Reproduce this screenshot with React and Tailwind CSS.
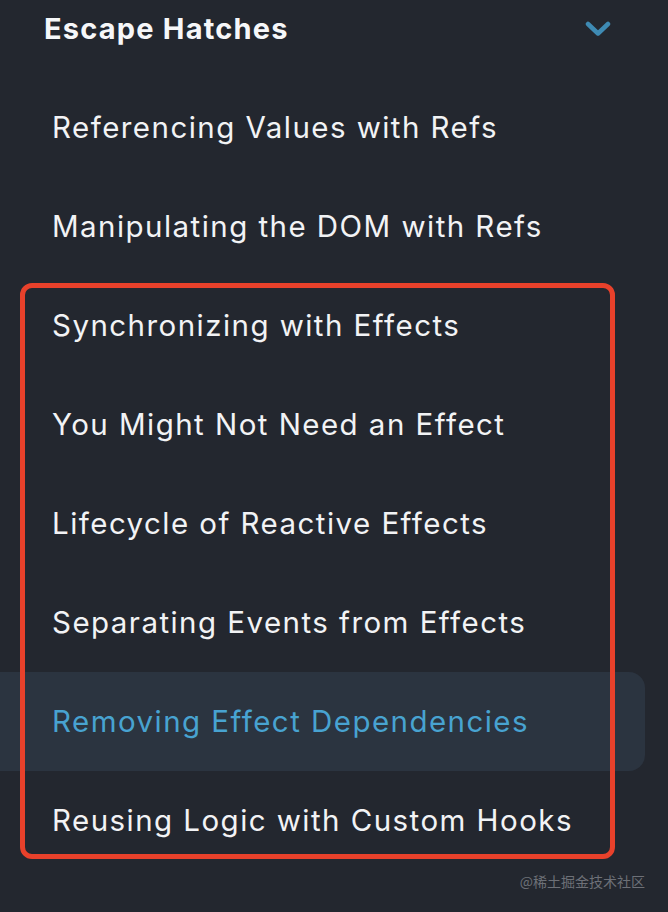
import React from 'react';

const items = [
  { title: 'Referencing Values with Refs' },
  { title: 'Manipulating the DOM with Refs' },
  { title: 'Synchronizing with Effects' },
  { title: 'You Might Not Need an Effect' },
  { title: 'Lifecycle of Reactive Effects' },
  { title: 'Separating Events from Effects' },
  { title: 'Removing Effect Dependencies', active: true },
  { title: 'Reusing Logic with Custom Hooks' },
];

function ChevronDown() {
  return (
    <svg width="26" height="16" viewBox="0 0 26 16" fill="none">
      <path d="M3 3 L13 12.5 L23 3" stroke="#3e8ab3" strokeWidth="4.5" strokeLinecap="round" strokeLinejoin="round" />
    </svg>
  );
}

function NavRow({ title, active }) {
  return (
    <div
      className={`flex h-[99px] w-[645px] items-center pl-[52px] rounded-r-2xl ${
        active ? 'bg-[#2b3440] text-[#48a3d1]' : 'text-[#f2f3f5]'
      }`}
    >
      <span className="text-[29.5px] leading-none tracking-[1.45px]">{title}</span>
    </div>
  );
}

export default function App() {
  return (
    <div
      className="relative h-[912px] w-[668px] overflow-hidden bg-[#23272f]"
      style={{ fontFamily: 'Inter, "Noto Sans", sans-serif' }}
    >
      {/* заголовок раздела */}
      <div className="flex h-[58px] items-center justify-between pl-[44px] pr-[57px]">
        <span className="text-[29px] font-bold tracking-[1.2px] text-[#f6f7f9]">Escape Hatches</span>
        <ChevronDown />
      </div>

      <div className="pt-[20px]">
        {items.map((item) => (
          <NavRow key={item.title} title={item.title} active={item.active} />
        ))}
      </div>

      {/* рамка поверх пунктов */}
      <div className="pointer-events-none absolute left-[20px] top-[283px] h-[576px] w-[595px] rounded-[12px] border-[5px] border-[#e8412b]" />

      <div
        className="absolute right-[23px] top-[871px] text-[14px] text-[#6d7077]"
        style={{ fontFamily: '"Noto Sans CJK SC", sans-serif' }}
      >
        @稀土掘金技术社区
      </div>
    </div>
  );
}
